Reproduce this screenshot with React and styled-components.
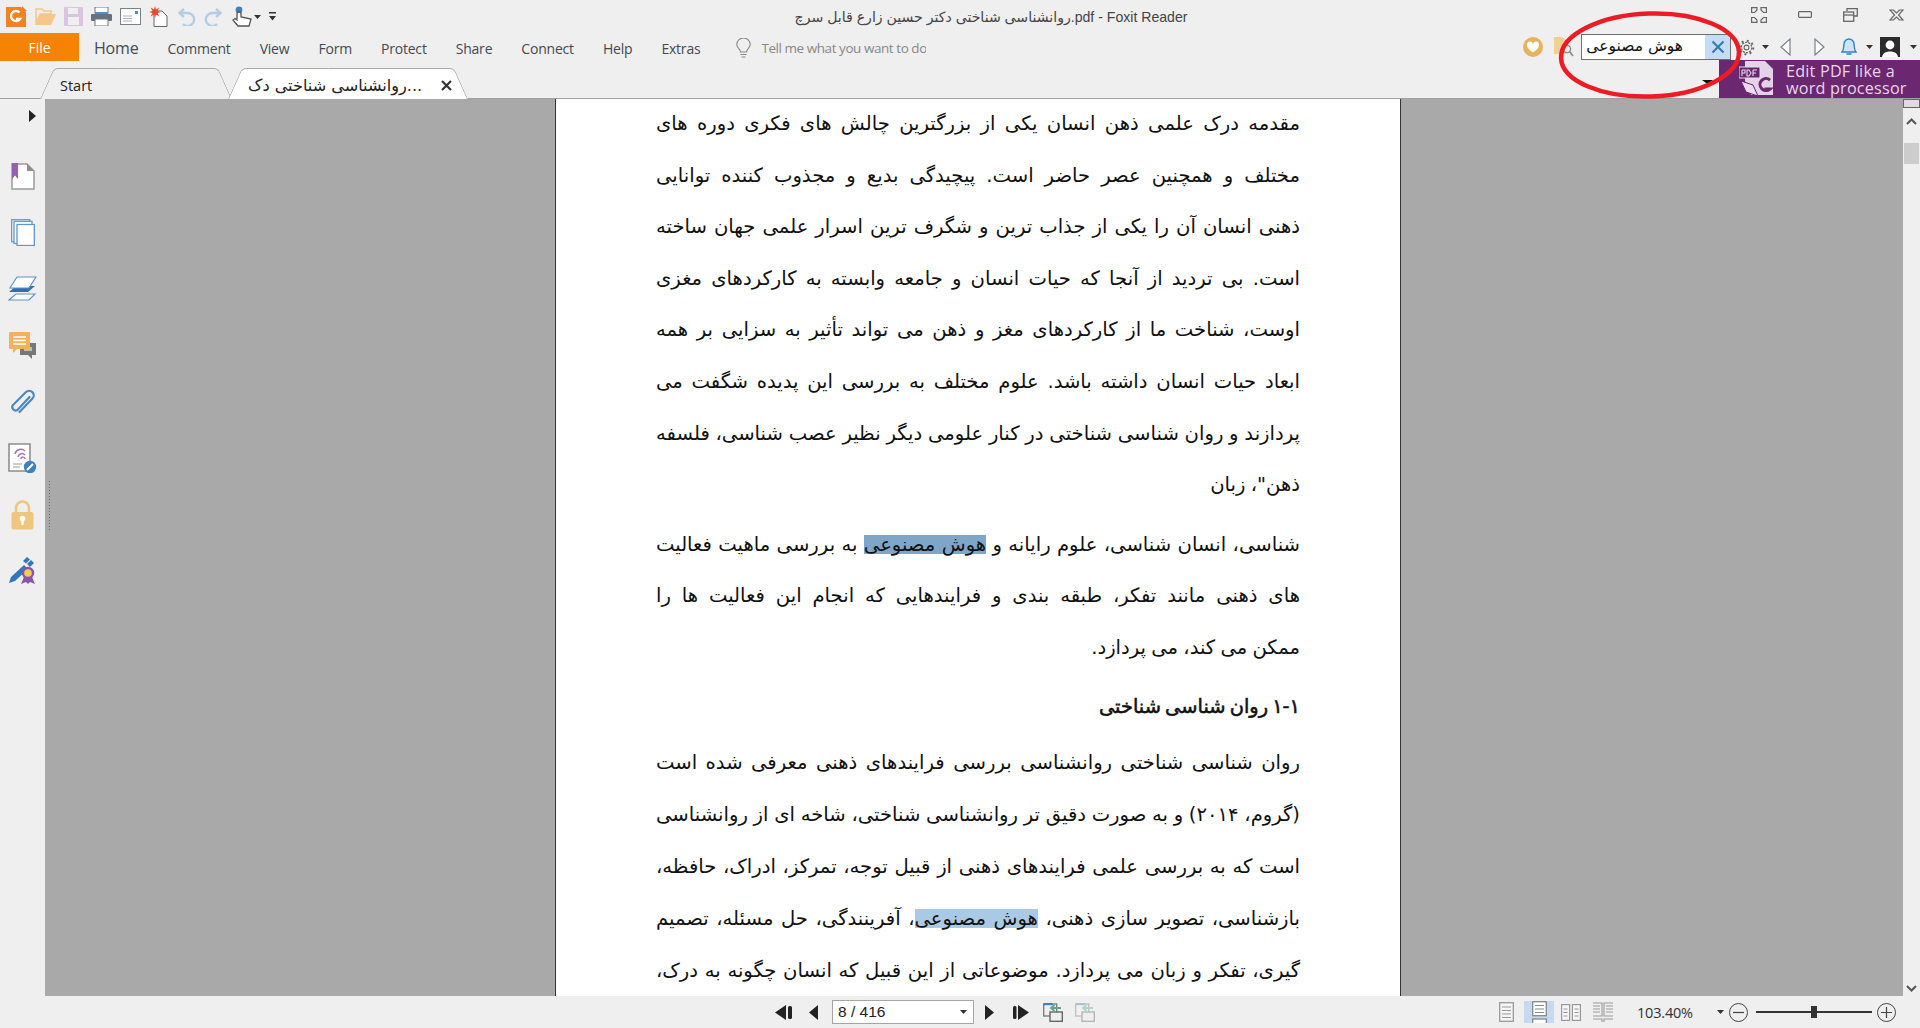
import React from 'react';
import styled, { createGlobalStyle } from 'styled-components';

const Global = createGlobalStyle`
  html, body { margin: 0; padding: 0; height: 100%; overflow: hidden; background: #efefef; }
  * { box-sizing: border-box; }
  #root { height: 100%; }
`;
const UI = `"Open Sans", "Noto Sans", "DejaVu Sans", sans-serif`;
const FA = `"DejaVu Sans", sans-serif`;

const Shell = styled.div`
  position: relative; width: 1920px; height: 1028px; display: flex; flex-direction: column;
  background: #efefef; overflow: hidden; font-family: ${UI};
`;
const TitleBar = styled.header`
  height: 33px; display: grid; grid-template-columns: 1fr auto 1fr; align-items: center; padding-left: 6px;
`;
const Quick = styled.div`display: flex; align-items: center; gap: 8px;`;
const TouchGroup = styled.div`display: flex; align-items: center; gap: 2px;`;
const Title = styled.div`
  font-family: "Liberation Sans", ${FA}; font-size: 14.1px; color: #444; white-space: nowrap; padding: 1px 0 0 56px;
`;
const WinControls = styled.div`
  display: flex; justify-content: flex-end; align-items: center; gap: 31px; padding: 0 16px 4px 0;
`;
const RibbonBar = styled.nav`height: 28px; display: flex; align-items: center; position: relative;`;
const FileTab = styled.div`
  width: 79px; height: 28px; background: #f58200; color: #fff; display: flex; align-items: center;
  justify-content: center; font-size: 14px;
`;
const Menus = styled.div`display: flex; align-items: baseline; gap: 29px; margin-left: 15px; padding-top: 1px;`;
const Menu = styled.div`
  font-size: ${p => (p.$main ? '16px' : '14px')}; color: #434a54; white-space: nowrap; letter-spacing: -0.2px;
`;
const Tell = styled.div`
  display: flex; align-items: center; gap: 10px; margin-left: 36px; width: 190px; overflow: hidden;
  color: #888; font-size: 13.5px; white-space: nowrap; letter-spacing: -0.45px; padding-top: 1px;
`;
const RibbonRight = styled.div`
  margin-left: auto; display: flex; align-items: center; height: 28px; padding-right: 3px;
`;
const SearchBox = styled.div`
  width: 150px; height: 26px; border: 1px solid #6f6f6f; background: #fff; display: flex; margin: 0 7px;
`;
const SearchText = styled.div`
  flex: 1; font-family: ${FA}; font-size: 15.5px; color: #111; direction: rtl; line-height: 23px; padding-right: 22px; white-space: nowrap;
`;
const SearchClear = styled.div`
  width: 25px; background: #c5dcf5; display: flex; align-items: center; justify-content: center;
`;
const TabRow = styled.div`
  height: 38px; display: flex; align-items: flex-end; position: relative; padding-left: 40px;
  border-bottom: 1px solid #a0a0a0;
`;
const Tab = styled.div`
  position: relative; height: 31px; width: ${p => p.$w}px; margin-left: ${p => p.$ml || 0}px;
  display: flex; align-items: center; padding: 3px ${p => p.$pr || 10}px 0 ${p => p.$pl}px; justify-content: space-between;
  color: #222; font-size: 14.5px; z-index: ${p => (p.$active ? 2 : 1)}; margin-bottom: -1px;
  &::before, &::after {
    content: ''; position: absolute; top: 0; bottom: 0; width: 52%; border-top: 1px solid #aaa;
    background: ${p => (p.$active ? '#fff' : '#efefef')}; z-index: -1;
  }
  &::before { left: 0; border-left: 1px solid #aaa; border-top-left-radius: 5px; transform-origin: bottom left; transform: skewX(-24deg); }
  &::after { right: 0; border-right: 1px solid #aaa; border-top-right-radius: 5px; transform-origin: bottom right; transform: skewX(24deg); }
`;
const TabLabel = styled.span`font-family: ${p => (p.$fa ? FA : UI)}; font-size: ${p => (p.$fa ? '16.1px' : '14.5px')}; white-space: nowrap;`;
const Promo = styled.div`
  position: absolute; right: 0; bottom: 0; width: 201px; height: 38px; background: #6b2770; display: flex; align-items: center;
  padding-left: 20px; gap: 11px; z-index: 3;
`;
const PromoText = styled.div`
  color: #e6d8e8; font-size: 16.2px; line-height: 17px; white-space: nowrap; letter-spacing: 0.2px; padding-top: 1px;
`;
const PromoCaret = styled.div`position: absolute; left: 1702px; bottom: 14px;`;
const Body = styled.main`flex: 1; min-height: 0; display: flex;`;
const Sidebar = styled.aside`
  width: 45px; display: flex; flex-direction: column; align-items: center; padding: 11px 0 0 0; flex: none;
`;
const SideToggle = styled.div`align-self: flex-end; margin: 0 9px 26px 0; height: 12px;`;
const SideSlot = styled.div`height: 56.4px; display: flex; align-items: center; justify-content: center; flex: none;`;
const Canvas = styled.div`
  flex: 1; background: #a9a9a9; display: flex; justify-content: center; position: relative; overflow: hidden;
`;
const Grip = styled.div`
  position: absolute; left: 3px; top: 381px; width: 3px; height: 52px;
  background: radial-gradient(circle, #666 0.8px, transparent 1px) 0 0 / 3px 3px;
`;
const Page = styled.article`
  width: 846px; margin-left: 8px; background: #fff; border-left: 1px solid #333; border-right: 1px solid #333;
  padding: 0 100px; direction: rtl; font-family: ${FA}; color: #111; font-size: 19.6px; word-spacing: -1px; overflow: hidden;
`;
const Para = styled.div`
  margin-top: ${p => p.$mt || 0}px; line-height: ${p => p.$lh || 51.6}px;
`;
const Line = styled.div`
  white-space: nowrap; text-align: justify;
  text-align-last: ${p => (p.$end ? 'start' : 'justify')};
`;
const Heading = styled.div`
  line-height: 51.6px; margin-top: 7px; font-size: 19.4px; -webkit-text-stroke: 0.55px #111; word-spacing: -2px;
`;
const Mark = styled.span`
  background: linear-gradient(${p => p.$tone}, ${p => p.$tone}) center / 100% 19px no-repeat;
`;
const Scrollbar = styled.div`
  width: 17px; flex: none; background: #efefef; display: flex; flex-direction: column; align-items: center;
`;
const ScrollCap = styled.div`width: 17px; height: 9px; background: #ddd; border: 1px solid #666; margin-top: 0;`;
const ScrollUp = styled.div`height: 17px; margin-top: 5px; display: flex; align-items: center;`;
const ScrollThumb = styled.div`width: 15px; height: 21px; background: #ccc; margin-top: 13px;`;
const ScrollDown = styled.div`margin-top: auto; height: 16px; display: flex; align-items: center;`;
const StatusBar = styled.footer`
  height: 32px; display: flex; align-items: center; padding: 0 24px 0 775px; flex: none;
`;
const PageNav = styled.div`display: flex; align-items: center;`;
const PageInput = styled.div`
  width: 142px; height: 24px; background: #fff; border: 1px solid #a5a5a5; margin: 0 11px 0 14px; display: flex;
  align-items: center; justify-content: space-between; padding: 0 6px 0 5px; font-family: "Liberation Sans", sans-serif;
  font-size: 15.5px; color: #222;
`;
const Gap = styled.span`display: inline-block; width: ${p => p.$w}px; flex: none;`;
const StatusRight = styled.div`margin-left: auto; display: flex; align-items: center;`;
const ViewBtn = styled.div`
  width: ${p => p.$w}px; height: 22px; display: flex; align-items: center; justify-content: center;
  background: ${p => (p.$on ? '#c5d9f1' : 'transparent')}; overflow: hidden;
`;
const Zoom = styled.div`font-family: "Open Sans", sans-serif; font-size: 14.5px; color: #333; width: 62px; white-space: nowrap; letter-spacing: -0.2px;`;
const Slider = styled.div`
  position: relative; width: 116px; height: 2px; background: #333; margin: 0 5px 0 8px;
  &::after { content: ''; position: absolute; left: 55px; top: -5px; width: 6px; height: 12px; background: #333; }
`;
const Annotation = styled.svg`position: absolute; left: 1550px; top: 4px; pointer-events: none; z-index: 10;`;

/* ---- drawn icons ---- */
const Ic = ({ w = 20, h = 20, vb, children }) => (
  <svg width={w} height={h} viewBox={vb || `0 0 ${w} ${h}`} style={{ display: 'block', flex: 'none' }}>{children}</svg>
);
const Caret = ({ c = '#333', w = 7 }) => <Ic w={w} h={4}><path d={`M0 0H${w}L${w / 2} 4Z`} fill={c} /></Ic>;

const Logo = () => (
  <Ic w={21} h={21}>
    <path d="M0 1H15L20 6V21H0Z" fill="#f58220" /><path d="M16 0L21 5H16Z" fill="#f58220" />
    <path d="M13.5 6.5A5 5 0 1 0 14 13H10" fill="none" stroke="#fff" strokeWidth="2.4" />
  </Ic>
);
const Folder = () => (
  <Ic w={21} h={19}>
    <path d="M1 2H7L9 4H16V7H5L1 16Z" fill="none" stroke="#f4c88f" strokeWidth="1.6" />
    <path d="M0 18L5 7H21L16 18Z" fill="#f6c78a" />
  </Ic>
);
const Save = () => (
  <Ic w={19} h={19}>
    <rect width="19" height="19" rx="1" fill="#d9c5e1" /><rect x="4" y="1" width="10" height="6" fill="#efefef" />
    <rect x="4" y="10" width="11" height="8" fill="#efefef" />
  </Ic>
);
const Printer = () => (
  <Ic w={21} h={19}>
    <rect x="4" y="0" width="13" height="6" fill="#fff" stroke="#6b7680" /><rect x="4" y="5" width="13" height="2" fill="#4c8fc9" />
    <rect x="0" y="7" width="21" height="7" rx="1" fill="#66727c" />
    <rect x="4" y="12" width="13" height="7" fill="#fff" stroke="#6b7680" />
  </Ic>
);
const Mail = () => (
  <Ic w={21} h={17}>
    <rect x=".5" y=".5" width="20" height="16" fill="#fff" stroke="#77828a" />
    <rect x="15" y="3" width="3" height="3" fill="#4c8fc9" />
    <path d="M3 8H12M3 10.5H12M3 13H12" stroke="#aab0b5" />
  </Ic>
);
const NewDoc = () => (
  <Ic w={19} h={21}>
    <path d="M5 5H13L18 10V20.5H5Z" fill="#fff" stroke="#666" />
    <path d="M6 0L7 3.5L10.5 1.5L8.5 5L12 6L8.5 7L10.5 10.5L7 8.5L6 12L5 8.5L1.5 10.5L3.5 7L0 6L3.5 5L1.5 1.5L5 3.5Z" fill="#e2492f" />
  </Ic>
);
const Undo = ({ flip }) => (
  <Ic w={20} h={19}>
    <g transform={flip ? 'matrix(-1 0 0 1 20 0)' : undefined} fill="none" stroke="#b3cde5" strokeWidth="2.4">
      <path d="M5 6H11A6.5 6.5 0 1 1 7 17" /><path d="M8 2L3.5 6L8 10" />
    </g>
  </Ic>
);
const Touch = () => (
  <Ic w={20} h={21}>
    <circle cx="7" cy="4" r="3.4" fill="#3d82bd" />
    <path d="M5 8V14L3 12.5L1 14L6 20H17L19 13L9 11V8A2 2 0 0 0 5 8Z" fill="#fff" stroke="#555" strokeWidth="1.3" />
  </Ic>
);
const Customize = () => (
  <Ic w={7} h={9}><path d="M0 0H7V1.5H0Z M0 4H7L3.5 8.5Z" fill="#333" /></Ic>
);
const Fullscreen = () => (
  <Ic w={16} h={16}>
    <g fill="none" stroke="#666" strokeWidth="1.2">
      <path d="M.6.6H6V3L3.5 5.5H.6ZM15.4.6H10V3L12.5 5.5H15.4ZM.6 15.4H6V13L3.5 10.5H.6ZM15.4 15.4H10V13L12.5 10.5H15.4Z" />
    </g>
  </Ic>
);
const Minimize = () => <Ic w={14} h={7}><rect x=".6" y=".6" width="12.8" height="5.8" rx="1" fill="none" stroke="#666" strokeWidth="1.2" /></Ic>;
const Restore = () => (
  <Ic w={15} h={14}><g fill="none" stroke="#666" strokeWidth="1.3">
    <path d="M4 3V.7H14.3V8H11" /><rect x=".7" y="4" width="10" height="9.3" /><path d="M1 7H10" />
  </g></Ic>
);
const CloseWin = () => (
  <Ic w={15} h={12}><path d="M1 1H4.5L7.5 4L10.5 1H14L9.5 6L14 11H10.5L7.5 8L4.5 11H1L5.5 6Z" fill="none" stroke="#666" strokeWidth="1.2" /></Ic>
);
const Bulb = () => (
  <Ic w={15} h={20}>
    <path d="M4.5 14C4 10 .8 10 .8 6.5A6.7 6.5 0 0 1 14.2 6.5C14.2 10 11 10 10.5 14Z" fill="none" stroke="#888" strokeWidth="1.1" />
    <path d="M4.5 16.5H10.5M5.5 19H9.5" stroke="#888" strokeWidth="1.2" />
  </Ic>
);
const Heart = () => (
  <Ic w={20} h={20}>
    <circle cx="10" cy="10" r="10" fill="#e7b15e" />
    <path d="M10 15.5C5 12 4 10 4 8A3 3 0 0 1 10 7A3 3 0 0 1 16 8C16 10 15 12 10 15.5Z" fill="#fff" />
  </Ic>
);
const FindDoc = () => (
  <Ic w={20} h={20}>
    <path d="M0 0H8L12 3V17H0Z" fill="#f2cf97" /><circle cx="13" cy="12" r="3.6" fill="#efefef" stroke="#8b8b8b" strokeWidth="1.4" />
    <path d="M15.5 14.5L19 19" stroke="#8b8b8b" strokeWidth="1.8" />
  </Ic>
);
const BlueX = () => <Ic w={14} h={14}><path d="M1.5 1.5L12.5 12.5M12.5 1.5L1.5 12.5" stroke="#2f79b4" strokeWidth="2" /></Ic>;
const Gear = () => (
  <Ic w={17} h={17}>
    <circle cx="8.5" cy="8.5" r="5.2" fill="none" stroke="#666" strokeWidth="1.2" strokeDasharray="2.2 1" />
    <circle cx="8.5" cy="8.5" r="6.8" fill="none" stroke="#666" strokeWidth="2" strokeDasharray="2 3.35" />
    <circle cx="8.5" cy="8.5" r="2.4" fill="none" stroke="#666" strokeWidth="1.1" />
  </Ic>
);
const Tri = ({ left }) => (
  <Ic w={11} h={18}><path d={left ? 'M10 1V17L1 9Z' : 'M1 1V17L10 9Z'} fill="#fff" stroke="#7b8087" strokeWidth="1.2" /></Ic>
);
const Bell = () => (
  <Ic w={16} h={18}>
    <path d="M1 14C3 12 2.5 9 3 6A5 5 0 0 1 13 6C13.5 9 13 12 15 14Z" fill="#cfe4f7" stroke="#2f83c5" strokeWidth="1.4" />
    <path d="M5.5 16H10.5" stroke="#2f83c5" strokeWidth="1.6" />
  </Ic>
);
const Avatar = () => (
  <Ic w={20} h={20}>
    <rect width="20" height="20" fill="#2b2b2b" />
    <circle cx="10" cy="8" r="4.4" fill="#fff" /><path d="M2 20C3 15 7 14.5 10 14.5S17 15 18 20Z" fill="#fff" />
  </Ic>
);
const PromoLogo = () => (
  <Ic w={36} h={36}>
    <path d="M6 0H26L34 8V34H22L12 34L6 20Z" fill="#e9dcec" opacity=".95" />
    <rect x="0" y="6" width="21" height="11" fill="#6b2770" stroke="#e9dcec" />
    <path d="M3 9V15M3 9H6V12H3M8 9V15H10L12 12L10 9ZM14 9V15M14 9H18M14 12H17" fill="none" stroke="#e9dcec" strokeWidth="1.1" />
    <path d="M2 20L14 24L19 35L7 31Z" fill="#e9dcec" stroke="#6b2770" />
    <path d="M31 19A6 6 0 1 0 31 28H25.5" fill="none" stroke="#6b2770" strokeWidth="3" />
  </Ic>
);
const TabClose = () => <Ic w={11} h={11}><path d="M1 1L10 10M10 1L1 10" stroke="#333" strokeWidth="2.2" /></Ic>;

const SideBookmark = () => (
  <Ic w={24} h={27}>
    <path d="M1 1H16L23 8V26H1Z" fill="#fff" stroke="#9a9a9a" strokeWidth="1.5" />
    <path d="M16 1L23 8H16Z" fill="#8f8f8f" />
    <path d="M1 0H7V16L4 12.5L1 16Z" fill="#9560b1" />
  </Ic>
);
const SidePages = () => (
  <Ic w={24} h={27}>
    <g fill="#fff" stroke="#6496c8" strokeWidth="1.3">
      <rect x=".7" y=".7" width="18" height="22" /><rect x="3" y="2.4" width="18" height="22" /><rect x="6" y="5.5" width="17.3" height="21" />
    </g>
  </Ic>
);
const SideLayers = () => (
  <Ic w={29} h={26}>
    <path d="M1 24L8 18H27L21 24Z" fill="#fff" stroke="#5d94cb" strokeWidth="1.2" />
    <path d="M1 16L8 10H27L20 16Z" fill="#2f6fb3" />
    <path d="M2 12L9 1H28L21 12Z" fill="#fff" stroke="#5d94cb" strokeWidth="1.2" />
  </Ic>
);
const SideComments = () => (
  <Ic w={28} h={27}>
    <path d="M11 11H27V23H23V27L19 23H11Z" fill="#777" /><rect x="15" y="15" width="8" height="4" fill="#efefef" opacity=".6" />
    <path d="M0 1Q0 0 1 0H20Q21 0 21 1V16Q21 17 20 17H8L4 21V17H1Q0 17 0 16Z" fill="#f4b15c" />
    <path d="M4 5H17M4 8.5H17M4 12H17" stroke="#fff" strokeWidth="1.3" />
  </Ic>
);
const SideClip = () => (
  <Ic w={25} h={27}>
    <path d="M20 8L8 21A3.5 3.5 0 0 1 3.2 16.3L16.5 3A4.6 4.6 0 0 1 23 9.5L10 23" transform="translate(-0.5 1)" fill="none" stroke="#4c88c0" strokeWidth="2.2" strokeLinecap="round" />
  </Ic>
);
const SideSign = () => (
  <Ic w={29} h={30}>
    <path d="M1 1H22V28H1Z" fill="#fff" stroke="#8f8f8f" strokeWidth="1.6" />
    <path d="M7 11A6 6 0 0 1 17 8M10 14A4 4 0 0 1 17 12M13 16C13 13 17 14 17 16" fill="none" stroke="#a871bd" strokeWidth="1.5" />
    <path d="M5 21H14M5 24H12" stroke="#9a9a9a" strokeWidth="1.2" />
    <circle cx="22" cy="24" r="6.2" fill="#3d82bd" /><path d="M19 27L25 21" stroke="#fff" strokeWidth="2" />
  </Ic>
);
const SideLock = () => (
  <Ic w={23} h={30}>
    <path d="M5 13V8A6.5 6.5 0 0 1 18 8V13" fill="none" stroke="#f0c57f" strokeWidth="2.6" />
    <rect x="0.5" y="12" width="22" height="17.5" rx="2" fill="#f0c57f" />
    <circle cx="11.5" cy="18.5" r="2.8" fill="#fff" /><rect x="10.4" y="19" width="2.2" height="6" fill="#fff" />
  </Ic>
);
const SidePen = () => (
  <Ic w={27} h={27}>
    <path d="M0 26L2 20L15 8L19 12L6 24Z" fill="#2d79bf" /><path d="M14 4L18 0L21 2.5L17 6.5Z" fill="#2d79bf" />
    <path d="M18 7L22 3L25 6L21 10Z" fill="#2d79bf" />
    <circle cx="19" cy="16" r="5" fill="#f2cf4f" stroke="#8a55a8" strokeWidth="2.4" />
    <path d="M15 20L12 27L17 25L19 27L21 25L26 27L23 20Z" fill="#8a55a8" />
  </Ic>
);
const Chevron = ({ up }) => (
  <Ic w={11} h={7}><path d={up ? 'M1 6L5.5 1.5L10 6' : 'M1 1L5.5 5.5L10 1'} fill="none" stroke="#555" strokeWidth="2" /></Ic>
);
const SolidLeft = () => <Ic w={9} h={15}><path d="M9 0V15L0 7.5Z" fill="#222" /></Ic>;
const SolidRight = () => <Ic w={9} h={15}><path d="M0 0V15L9 7.5Z" fill="#222" /></Ic>;
const First = () => <Ic w={17} h={15}><path d="M11 0V15L0 7.5Z" fill="#222" /><rect x="13" y="1" width="4" height="13" rx="1.5" fill="#222" /></Ic>;
const Last = () => <Ic w={16} h={15}><path d="M5 0V15L16 7.5Z" fill="#222" /><rect x="0" y="1" width="3.5" height="13" rx="1.5" fill="#222" /></Ic>;
const PrevView = ({ off }) => (
  <Ic w={20} h={20}>
    <g opacity={off ? 0.4 : 1}>
      <rect x=".7" y="2" width="13" height="12" fill={off ? '#f5f5f5' : '#efefef'} stroke="#777" strokeWidth="1.3" />
      <rect x=".7" y="1" width="9" height="2.2" fill="#3d82bd" />
      <rect x="7" y="10" width="12.3" height="9.3" fill="#efefef" stroke="#666" strokeWidth="1.4" />
      <path d="M8 6H18M11.5 3L8 6L11.5 9" fill="none" stroke="#5ca794" strokeWidth="1.8" />
    </g>
  </Ic>
);
const Doc = ({ w = 15, h = 20 }) => (
  <Ic w={w} h={h}>
    <rect x=".7" y=".7" width={w - 1.4} height={h - 1.4} fill="#f6f6f6" stroke="#999" strokeWidth="1.3" />
    <path d={`M3 5H${w - 3}M3 8.5H${w - 3}M3 12H${w - 3}M3 15.5H${w - 3}`} stroke="#999" />
  </Ic>
);
const Continuous = () => (
  <Ic w={15} h={22}>
    <rect x=".7" y="0.7" width="13.6" height="14" fill="#fff" stroke="#888" strokeWidth="1.3" />
    <path d="M3 4.5H12M3 8H12M3 11.5H12" stroke="#888" />
    <rect x=".7" y="18" width="13.6" height="6" fill="#fff" stroke="#888" strokeWidth="1.3" />
  </Ic>
);
const Facing = () => (
  <Ic w={20} h={17}>
    <g fill="#f6f6f6" stroke="#999" strokeWidth="1.2">
      <rect x=".6" y=".6" width="8" height="15.8" /><rect x="11.4" y=".6" width="8" height="15.8" />
    </g>
    <path d="M2.5 5H6.5M2.5 8.5H6.5M2.5 12H6.5M13.5 5H17.5M13.5 8.5H17.5M13.5 12H17.5" stroke="#999" />
  </Ic>
);
const FacingCont = () => (
  <Ic w={20} h={20}>
    <path d="M0 1H9V14H0M20 1H11V14H20M0 4H7M0 7H7M0 10H7M13 4H20M13 7H20M13 10H20M0 17H9V20M20 17H11V20" fill="none" stroke="#999" strokeWidth="1.1" />
  </Ic>
);
const Circle = ({ plus }) => (
  <Ic w={19} h={19}>
    <circle cx="9.5" cy="9.5" r="9" fill="none" stroke="#444" />
    <path d={plus ? 'M4 9.5H15M9.5 4V15' : 'M4 9.5H15'} stroke="#444" strokeWidth="1.2" />
  </Ic>
);

const TITLE = 'روانشناسی شناختی دکتر حسین زارع قابل سرچ.pdf - Foxit Reader';
const HIT = 'هوش مصنوعی';
const SIDE_ICONS = [SideBookmark, SidePages, SideLayers, SideComments, SideClip, SideSign, SideLock, SidePen];

export default function App() {
  return (
    <Shell>
      <Global />
      <TitleBar>
        <Quick>
          <Logo /><Folder /><Save /><Printer /><Mail /><NewDoc /><Undo /><Undo flip />
          <TouchGroup><Touch /><Caret /></TouchGroup>
          <Customize />
        </Quick>
        <Title>{TITLE}</Title>
        <WinControls><Fullscreen /><Minimize /><Restore /><CloseWin /></WinControls>
      </TitleBar>
      <RibbonBar>
        <FileTab>File</FileTab>
        <Menus>
          <Menu $main>Home</Menu><Menu>Comment</Menu><Menu>View</Menu><Menu>Form</Menu><Menu>Protect</Menu>
          <Menu>Share</Menu><Menu>Connect</Menu><Menu>Help</Menu><Menu>Extras</Menu>
        </Menus>
        <Tell><Bulb />Tell me what you want to do...</Tell>
        <RibbonRight>
          <Heart /><Gap $w={11} /><FindDoc />
          <SearchBox>
            <SearchText>{HIT}</SearchText>
            <SearchClear><BlueX /></SearchClear>
          </SearchBox>
          <Gear /><Gap $w={7} /><Caret /><Gap $w={11} /><Tri left /><Gap $w={23} /><Tri /><Gap $w={16} />
          <Bell /><Gap $w={9} /><Caret /><Gap $w={7} /><Avatar /><Gap $w={10} /><Caret />
        </RibbonRight>
      </RibbonBar>
      <TabRow>
        <Tab $w={192} $pl={20}><TabLabel>Start</TabLabel></Tab>
        <Tab $w={240} $ml={-4} $pl={20} $active $pr={16}>
          <TabLabel $fa>روانشناسی شناختی دک...</TabLabel><TabClose />
        </Tab>
        <PromoCaret><Caret c="#111" w={11} /></PromoCaret>
        <Promo>
          <PromoLogo />
          <PromoText>Edit PDF like a<br />word processor</PromoText>
        </Promo>
      </TabRow>
      <Body>
        <Sidebar>
          <SideToggle><Ic w={7} h={12}><path d="M0 0V12L7 6Z" fill="#222" /></Ic></SideToggle>
          {SIDE_ICONS.map((Icon, i) => <SideSlot key={i}><Icon /></SideSlot>)}
        </Sidebar>
        <Canvas>
          <Grip />
          <Page>
            <Para $mt={-1}>
              <Line>مقدمه درک علمی ذهن انسان یکی از بزرگترین چالش های فکری دوره های</Line>
              <Line>مختلف و همچنین عصر حاضر است. پیچیدگی بدیع و مجذوب کننده توانایی</Line>
              <Line>ذهنی انسان آن را یکی از جذاب ترین و شگرف ترین اسرار علمی جهان ساخته</Line>
              <Line>است. بی تردید از آنجا که حیات انسان و جامعه وابسته به کارکردهای مغزی</Line>
              <Line>اوست، شناخت ما از کارکردهای مغز و ذهن می تواند تأثیر به سزایی بر همه</Line>
              <Line>ابعاد حیات انسان داشته باشد. علوم مختلف به بررسی این پدیده شگفت می</Line>
              <Line>پردازند و روان شناسی شناختی در کنار علومی دیگر نظیر عصب شناسی، فلسفه</Line>
              <Line $end>ذهن"، زبان</Line>
            </Para>
            <Para $mt={8}>
              <Line>شناسی، انسان شناسی، علوم رایانه و <Mark $tone="#7ea6c9">{HIT}</Mark> به بررسی ماهیت فعالیت</Line>
              <Line>های ذهنی مانند تفکر، طبقه بندی و فرایندهایی که انجام این فعالیت ها را</Line>
              <Line $end>ممکن می کند، می پردازد.</Line>
            </Para>
            <Heading>۱-۱ روان شناسی شناختی</Heading>
            <Para $mt={5} $lh={52}>
              <Line>روان شناسی شناختی روانشناسی بررسی فرایندهای ذهنی معرفی شده است</Line>
              <Line>(گروم، ۲۰۱۴) و به صورت دقیق تر روانشناسی شناختی، شاخه ای از روانشناسی</Line>
              <Line>است که به بررسی علمی فرایندهای ذهنی از قبیل توجه، تمرکز، ادراک، حافظه،</Line>
              <Line>بازشناسی، تصویر سازی ذهنی، <Mark $tone="#a9c9e4">{HIT}</Mark>، آفرینندگی، حل مسئله، تصمیم</Line>
              <Line>گیری، تفکر و زبان می پردازد. موضوعاتی از این قبیل که انسان چگونه به درک،</Line>
            </Para>
          </Page>
        </Canvas>
        <Scrollbar>
          <ScrollCap />
          <ScrollUp><Chevron up /></ScrollUp>
          <ScrollThumb />
          <ScrollDown><Chevron /></ScrollDown>
        </Scrollbar>
      </Body>
      <StatusBar>
        <PageNav>
          <First /><Gap $w={17} /><SolidLeft />
          <PageInput><span>8 / 416</span><Caret /></PageInput>
          <SolidRight /><Gap $w={19} /><Last /><Gap $w={14} /><PrevView /><Gap $w={12} /><PrevView off />
        </PageNav>
        <StatusRight>
          <Doc /><Gap $w={10} />
          <ViewBtn $w={30} $on><Continuous /></ViewBtn><Gap $w={7} />
          <Facing /><Gap $w={12} /><FacingCont /><Gap $w={24} />
          <Zoom>103.40%</Zoom><Gap $w={18} /><Caret /><Gap $w={5} /><Circle /><Slider /><Circle plus />
        </StatusRight>
      </StatusBar>
      <Annotation width="200" height="100" viewBox="0 0 200 100">
        <ellipse cx="100" cy="51" rx="89" ry="41.5" fill="none" stroke="#ed1c24" strokeWidth="4.5" transform="rotate(-2 100 51)" />
      </Annotation>
    </Shell>
  );
}
